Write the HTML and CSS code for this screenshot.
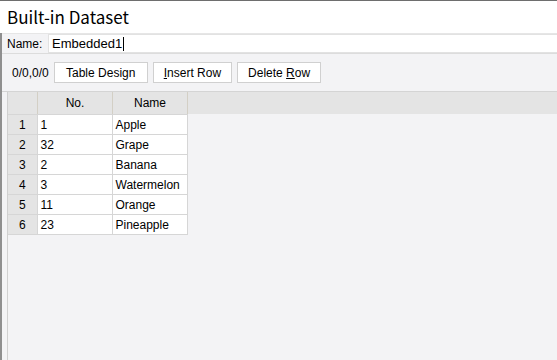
FILE: index.html
```html
<!DOCTYPE html>
<html lang="en">
<head>
    <meta charset="UTF-8">
    <title>Built-in Dataset</title>
    <link rel="stylesheet" href="styles.css">
</head>
<body>
    <div class="titlebar">Built-in Dataset</div>

    <div class="content">
        <div class="name-row">
            <label>Name:</label>
            <div class="name-input">Embedded1<span class="caret"></span></div>
        </div>

        <div class="toolbar">
            <span class="pos">0/0,0/0</span>
            <button class="wide">Table Design</button>
            <button><u>I</u>nsert Row</button>
            <button>Delete <u>R</u>ow</button>
        </div>

        <div class="grid-area">
            <div class="grid-head">
                <div class="corner"></div>
                <div class="col-head">No.</div>
                <div class="col-head">Name</div>
            </div>
            <table class="grid">
                <colgroup>
                    <col class="c-num">
                    <col class="c-data">
                    <col class="c-data">
                </colgroup>
                <tr><th>1</th><td>1</td><td>Apple</td></tr>
                <tr><th>2</th><td>32</td><td>Grape</td></tr>
                <tr><th>3</th><td>2</td><td>Banana</td></tr>
                <tr><th>4</th><td>3</td><td>Watermelon</td></tr>
                <tr><th>5</th><td>11</td><td>Orange</td></tr>
                <tr><th>6</th><td>23</td><td>Pineapple</td></tr>
            </table>
        </div>
    </div>
</body>
</html>
```

FILE: styles.css
```css
/* pagina completa */
body, html {
    margin: 0;
    padding: 0;
    height: 100%;
}

body {
    background: #f3f3f5;
    font-family: "Liberation Sans", Arial, sans-serif;
    font-size: 12px;
    color: #000;
    display: flex;
    flex-direction: column;
    overflow: hidden;
}

/* barra de titulo */
.titlebar {
    height: 32px;
    line-height: 32px;
    background: #fff;
    border-top: 1px solid #6e6e6e;
    padding-left: 7px;
    font-family: "Noto Sans CJK SC", "Noto Sans", sans-serif;
    font-size: 17px;
}

.content {
    flex: 1;
    display: flex;
    flex-direction: column;
    border-left: 2px solid #8f8f8f;
}

/* fila del nombre */
.name-row {
    display: flex;
    align-items: center;
    height: 19px;
    border-top: 1px solid #e6e6e6;
    border-bottom: 1px solid #dcdcdc;
}

.name-row label {
    padding-left: 5px;
    width: 41px;
}

.name-input {
    flex: 1;
    height: 17px;
    line-height: 17px;
    background: #fff;
    border: 1px solid #e2e2e2;
    border-right: none;
    padding-left: 3px;
    font-size: 13px;
    display: flex;
    align-items: center;
}

.caret {
    display: inline-block;
    width: 1px;
    height: 14px;
    background: #000;
    margin-left: 1px;
}

/* barra de botones */
.toolbar {
    display: flex;
    align-items: center;
    height: 37px;
    border-bottom: 1px solid #d4d4d4;
    padding-left: 10px;
}

.pos {
    margin-right: 5px;
}

.toolbar button {
    height: 21px;
    padding: 0 10px;
    margin-right: 5px;
    background: #fff;
    border: 1px solid #d0d0d0;
    font-family: "Liberation Sans", Arial, sans-serif;
    font-size: 12px;
    color: #000;
}

.toolbar button.wide {
    min-width: 94px;
}

/* area de la tabla */
.grid-area {
    flex: 1;
    margin-left: 5px;
    border-left: 1px solid #d0d0d0;
}

.grid-head {
    display: flex;
    height: 22px;
    background: #e4e4e4;
}

.corner {
    width: 29px;
}

.col-head {
    width: 74px;
    line-height: 22px;
    text-align: center;
    border-left: 1px solid #d3cfc5;
}

.col-head:last-child {
    border-right: 1px solid #d3cfc5;
}

.grid {
    border-collapse: collapse;
    table-layout: fixed;
    width: 179px;
}

.c-num {
    width: 29px;
}

.c-data {
    width: 75px;
}

.grid th,
.grid td {
    height: 19px;
    padding: 0 0 0 3px;
    border: 1px solid #d6d6d6;
    font-weight: normal;
    text-align: left;
    white-space: nowrap;
    overflow: hidden;
}

.grid th {
    background: #e4e4e4;
    text-align: center;
    padding: 0;
    border-left: none;
}

.grid td {
    background: #fff;
}
```
